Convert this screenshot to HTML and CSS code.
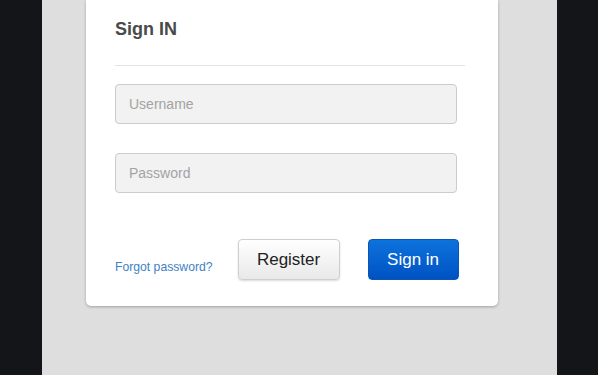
FILE: index.html
```html
<!DOCTYPE html>
<html>
<head>
<meta charset="utf-8">
<link rel="stylesheet" href="styles.css">
</head>
<body>
<div class="page">
  <div class="side"></div>
  <main class="stage">
    <form class="card">
      <h1 class="title">Sign IN</h1>
      <hr class="divider">
      <input class="field" type="text" placeholder="Username">
      <input class="field field-gap" type="password" placeholder="Password">
      <div class="actions">
        <a class="forgot" href="#">Forgot password?</a>
        <button type="button" class="btn btn-register">Register</button>
        <button type="button" class="btn btn-signin">Sign in</button>
      </div>
    </form>
  </main>
  <div class="side"></div>
</div>
</body>
</html>
```
FILE: styles.css
```css
html, body {
  margin: 0;
  padding: 0;
  height: 100%;
  background: #131519;
  font-family: "Liberation Sans", Arial, sans-serif;
}
.page {
  display: flex;
  height: 375px;
  overflow: hidden;
}
.side {
  width: 42px;
  flex: none;
  background: #131519;
}
.stage {
  width: 515px;
  flex: none;
  background: #dedede;
}
.card {
  box-sizing: border-box;
  width: 412px;
  margin-left: 44px;
  padding: 18px 33px 26px 29px;
  background: #fff;
  border-radius: 0 0 5px 5px;
  box-shadow: 0 1px 3px rgba(0,0,0,0.28);
  display: flex;
  flex-direction: column;
}
.title {
  margin: 0;
  font-size: 18px;
  line-height: 22px;
  font-weight: bold;
  color: #4a4a4a;
}
.divider {
  margin: 25px 0 18px 0;
  border: 0;
  height: 1px;
  background: #e3e3e3;
}
.field {
  box-sizing: border-box;
  width: 342px;
  height: 40px;
  margin: 0;
  padding: 0 13px;
  border: 1px solid #cccccc;
  border-radius: 4px;
  background: #f2f2f2;
  font-family: "Liberation Sans", Arial, sans-serif;
  font-size: 14px;
  color: #333;
  outline: none;
}
.field::placeholder {
  color: #a3a3a3;
}
.field-gap {
  margin-top: 29px;
}
.actions {
  display: flex;
  align-items: center;
  margin-top: 46px;
}
.forgot {
  font-size: 12.2px;
  color: #3f82c4;
  text-decoration: none;
  margin-top: 14px;
}
.btn {
  box-sizing: border-box;
  height: 41px;
  border-radius: 4px;
  font-family: "Liberation Sans", Arial, sans-serif;
  font-size: 17px;
  padding: 0;
  cursor: pointer;
}
.btn-register {
  width: 102px;
  margin-left: 25px;
  color: #222;
  border: 1px solid #cfcfcf;
  background: linear-gradient(#ffffff, #e9e9e9);
  box-shadow: 0 1px 2px rgba(0,0,0,0.15);
}
.btn-signin {
  width: 91px;
  margin-left: 28px;
  color: #fff;
  border: 1px solid #0a55b8;
  background: linear-gradient(#0d73dc, #0052c3);
}
```
